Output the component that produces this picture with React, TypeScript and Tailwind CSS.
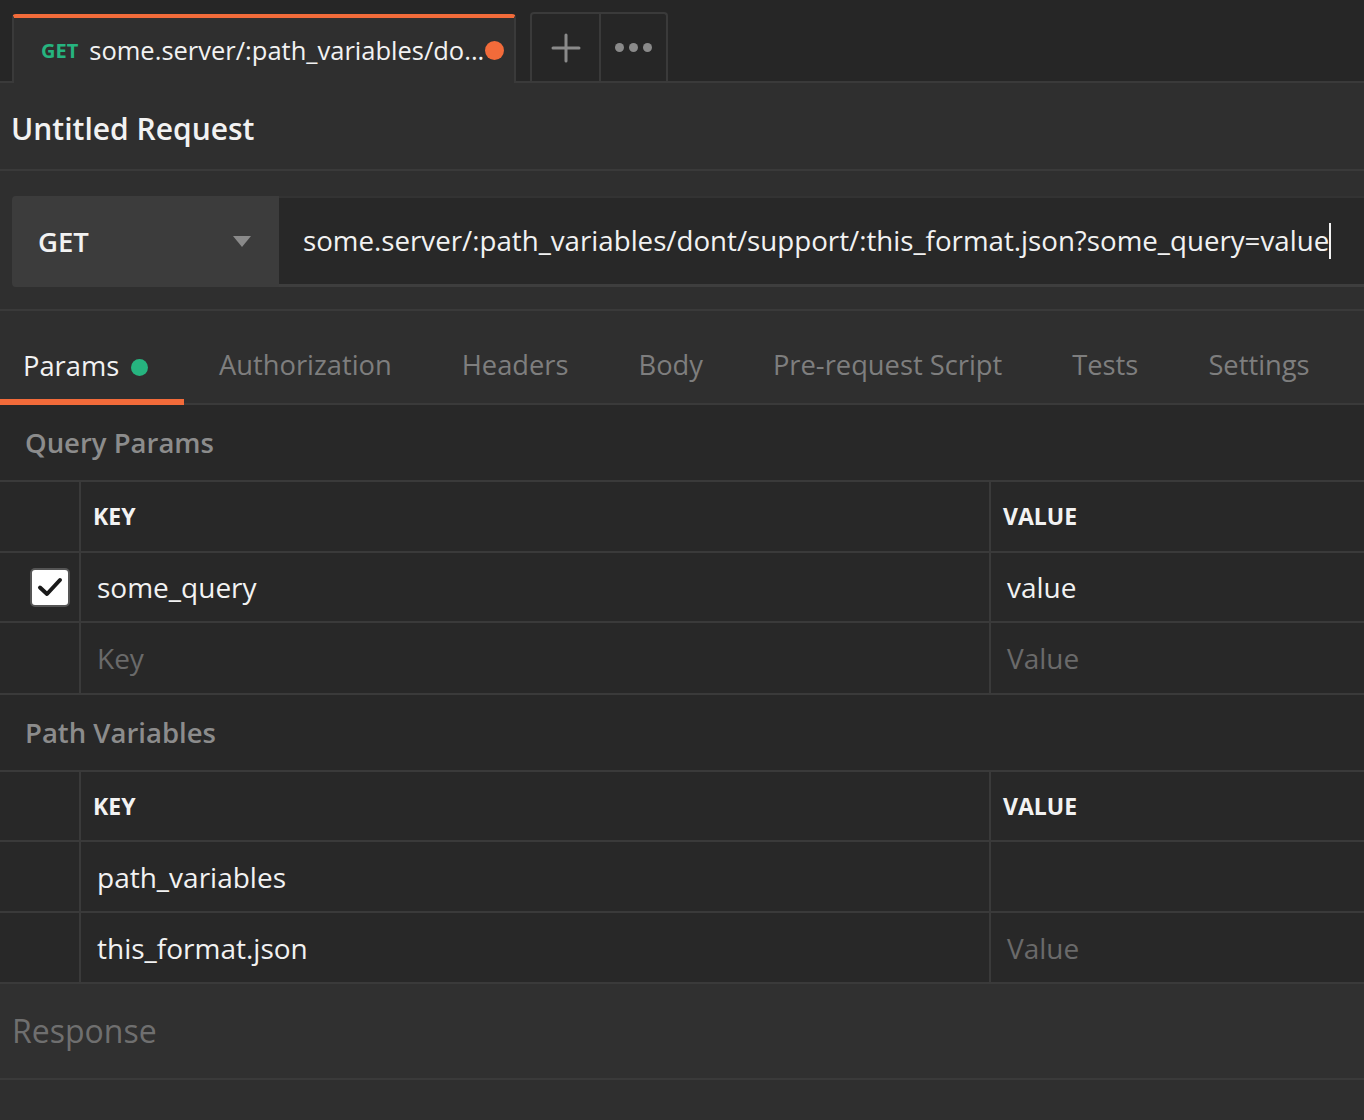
import React from "react";

function Row({ check, k, v, kPh, vPh, h }: { check?: boolean; k?: string; v?: string; kPh?: boolean; vPh?: boolean; h: string }) {
  return (
    <div className={`flex border-b-2 border-[#3a3a3a] ${h}`}>
      <div className="w-[81px] shrink-0 border-r-2 border-[#3a3a3a] flex items-center justify-end pr-[9px]">
        {check && (
          <div className="w-[40px] h-[39px] rounded-[5px] bg-white border-2 border-[#555] flex items-center justify-center">
            <svg width="26" height="22" viewBox="0 0 26 22" fill="none">
              <path d="M3 11.5 L10 18 L23 4" stroke="#1a1a1a" strokeWidth="4" strokeLinecap="round" strokeLinejoin="round" />
            </svg>
          </div>
        )}
      </div>
      <div className={`w-[910px] shrink-0 border-r-2 border-[#3a3a3a] flex items-center pl-[16px] text-[28px] ${kPh ? "text-[#6a6a6a]" : "text-[#f2f2f2]"}`}>
        {k}
      </div>
      <div className={`flex-1 flex items-center pl-[16px] text-[28px] ${vPh ? "text-[#6a6a6a]" : "text-[#f2f2f2]"}`}>
        {v}
      </div>
    </div>
  );
}

function Header({ h }: { h: string }) {
  return (
    <div className={`flex border-y-2 border-[#3a3a3a] ${h}`}>
      <div className="w-[81px] shrink-0 border-r-2 border-[#3a3a3a]" />
      <div className="w-[910px] shrink-0 border-r-2 border-[#3a3a3a] flex items-center pl-[12px] text-[23px] font-bold text-[#f2f2f2]">
        KEY
      </div>
      <div className="flex-1 flex items-center pl-[12px] text-[23px] font-bold text-[#f2f2f2]">VALUE</div>
    </div>
  );
}

export default function App() {
  return (
    <div className="w-[1364px] h-[1120px] bg-[#2f2f2f] font-['Open_Sans','Noto_Sans',sans-serif] overflow-hidden">
      {/* Tab bar */}
      <div className="h-[83px] bg-[#262626] flex items-end border-b-2 border-[#3a3a3a]">
        <div className="ml-[12px] w-[504px] h-[69px] -mb-[2px] bg-[#2f2f2f] border-t-[4px] border-t-[#f26b3a] border-x-2 border-x-[#3a3a3a] rounded-t-[4px] flex items-center pl-[27px]">
          <span className="text-[20px] font-bold text-[#26b47f] mr-[11px]">GET</span>
          <span className="text-[25.5px] text-[#f2f2f2] whitespace-nowrap">some.server/:path_variables/do...</span>
          <span className="w-[19px] h-[19px] rounded-full bg-[#f26b3a] ml-[1px] shrink-0" />
        </div>
        <div className="ml-[14px] h-[69px] flex border-2 border-b-0 border-[#3a3a3a] rounded-t-[4px]">
          <div className="w-[69px] flex items-center justify-center border-r-2 border-[#3a3a3a]">
            <svg width="30" height="30" viewBox="0 0 30 30">
              <path d="M15 2 V28 M2 15 H28" stroke="#8a8a8a" strokeWidth="3" strokeLinecap="round" />
            </svg>
          </div>
          <div className="w-[65px] flex items-center justify-center gap-[5px]">
            <span className="w-[9px] h-[9px] rounded-full bg-[#8a8a8a]" />
            <span className="w-[9px] h-[9px] rounded-full bg-[#8a8a8a]" />
            <span className="w-[9px] h-[9px] rounded-full bg-[#8a8a8a]" />
          </div>
        </div>
      </div>

      {/* Title */}
      <div className="h-[88px] bg-[#2f2f2f] border-b-2 border-[#3a3a3a] flex items-center pl-[11px] pt-[5px]">
        <span className="text-[30px] font-semibold text-[#f2f2f2]">Untitled Request</span>
      </div>

      {/* URL bar */}
      <div className="h-[140px] bg-[#2f2f2f] border-b-2 border-[#3a3a3a] pt-[25px] pl-[12px]">
        <div className="flex h-[91px]">
          <div className="w-[267px] bg-[#3c3c3c] rounded-l-[4px] flex items-center justify-between pl-[26px] pr-[28px]">
            <span className="text-[27.5px] font-semibold text-[#f2f2f2]">GET</span>
            <svg width="18" height="11" viewBox="0 0 18 11">
              <path d="M0 0 H18 L9 11 Z" fill="#8a8a8a" />
            </svg>
          </div>
          <div className="flex-1 bg-[#282828] border-t-2 border-t-[#333] border-b-[3px] border-b-[#3e3e3e] flex items-center pl-[24px] overflow-hidden">
            <span className="text-[27.7px] text-[#f2f2f2] whitespace-nowrap">some.server/:path_variables/dont/support/:this_format.json?some_query=value</span>
            <span className="w-[2px] h-[36px] bg-[#f2f2f2] shrink-0" />
          </div>
        </div>
      </div>

      {/* Tabs */}
      <div className="h-[94px] bg-[#2f2f2f] border-b-2 border-[#3a3a3a] flex">
        <div className="w-[184px] pl-[23px] flex items-center border-b-[6px] border-[#f26b3a] -mb-[2px] pt-[22px]">
          <span className="text-[27.3px] text-[#f2f2f2]">Params</span>
          <span className="w-[17px] h-[17px] rounded-full bg-[#26b47f] ml-[12px] mt-[2px]" />
        </div>
        <div className="flex items-center gap-[70px] ml-[35px] pt-[16px] text-[27.3px] text-[#7e7e7e]">
          <span>Authorization</span>
          <span>Headers</span>
          <span>Body</span>
          <span>Pre-request Script</span>
          <span>Tests</span>
          <span>Settings</span>
        </div>
      </div>

      {/* Content */}
      <div className="bg-[#282828]">
        <div className="h-[75px] flex items-center pl-[25px] text-[27.5px] font-semibold text-[#8c8c8c]">Query Params</div>
        <Header h="h-[73px]" />
        <Row check k="some_query" v="value" h="h-[70px]" />
        <Row k="Key" v="Value" kPh vPh h="h-[72px]" />
        <div className="h-[75px] flex items-center pl-[25px] text-[27.5px] font-semibold text-[#8c8c8c]">Path Variables</div>
        <Header h="h-[72px]" />
        <Row k="path_variables" v="" h="h-[71px]" />
        <Row k="this_format.json" v="Value" vPh h="h-[71px]" />
      </div>

      {/* Response */}
      <div className="h-[96px] bg-[#303030] border-b-2 border-[#3a3a3a] flex items-center pl-[12px]">
        <span className="text-[32px] text-[#6f6f6f]">Response</span>
      </div>
    </div>
  );
}
